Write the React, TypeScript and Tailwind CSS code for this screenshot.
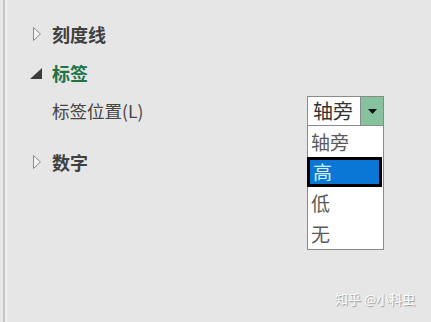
import React from "react";

const font = "font-['Microsoft_YaHei','Noto_Sans_CJK_SC',sans-serif]";

function OutlineArrow() {
  return (
    <svg width="9" height="14" viewBox="0 0 9 14" className="ml-[28px]">
      <polygon points="0.5,0.5 7.5,7 0.5,13.5" fill="#f2f2f2" stroke="#8a8a8a" strokeWidth="1" />
    </svg>
  );
}

function FilledArrow() {
  return (
    <svg width="12" height="11" viewBox="0 0 12 11" className="ml-[25px]">
      <polygon points="12,0 12,11 0,11" fill="#3c3c3c" />
    </svg>
  );
}

function Section({ title, open, green }: { title: string; open?: boolean; green?: boolean }) {
  return (
    <div className="flex items-center h-[24px]">
      <div className="w-[47px] flex items-center">{open ? <FilledArrow /> : <OutlineArrow />}</div>
      <span
        className={`text-[18px] leading-[24px] font-bold ${green ? "text-[#217346]" : "text-[#404040]"}`}
      >
        {title}
      </span>
    </div>
  );
}

const options = ["轴旁", "高", "低", "无"];

export default function App() {
  return (
    <div className={`relative w-[431px] h-[322px] bg-[#e6e6e6] flex ${font}`}>
      <div className="w-[3px] bg-[#e8e8e8]" />
      <div className="w-[2px] bg-[#c4c4c4]" />
      <div className="w-[2px] bg-[#eeeeee]" />

      <div className="flex-1 flex flex-col pt-[22px] ml-[-2px]">
        <Section title="刻度线" />
        <div className="mt-[15px]">
          <Section title="标签" open green />
        </div>

        {/* 标签位置 row */}
        <div className="mt-[11px] flex items-center h-[30px]">
          <span className="w-[302px] shrink-0 pl-[47px] text-[17.5px] leading-[24px] text-[#444]">标签位置(L)</span>
          <div className="relative w-[77px] h-[30px] shrink-0">
            <div className="flex h-full bg-white border border-[#8a8a8a]">
              <span className="flex-1 pl-[5px] text-[20px] leading-[28px] text-[#333]">轴旁</span>
              <div className="w-[23px] bg-[#86c29e] border-l border-[#8a8a8a] flex items-center justify-center">
                <svg width="9" height="5" viewBox="0 0 9 5">
                  <polygon points="0,0 9,0 4.5,5" fill="#111" />
                </svg>
              </div>
            </div>

            {/* dropdown list */}
            <div className="absolute left-0 top-full w-[77px] bg-white border border-t-0 border-[#8a8a8a] flex flex-col">
              {options.map((o, i) =>
                i === 1 ? (
                  <div
                    key={o}
                    className="h-[30px] ml-[-1px] mr-[1px] border-[3px] border-black bg-[#0a76d6] pl-[3px] text-[19px] leading-[24px] text-[#d4f0ff]"
                  >
                    {o}
                  </div>
                ) : (
                  <div key={o} className="h-[31px] pl-[3px] text-[19px] leading-[31px] text-[#5a5a5a]">
                    {o}
                  </div>
                ),
              )}
            </div>
          </div>
        </div>

        <div className="mt-[24px]">
          <Section title="数字" />
        </div>
      </div>

      <div className="absolute left-[335px] top-[290px] text-[13px] leading-[18px] text-white [text-shadow:1px_1px_1px_rgba(0,0,0,0.35)]">
        知乎 @小科虫
      </div>
    </div>
  );
}
